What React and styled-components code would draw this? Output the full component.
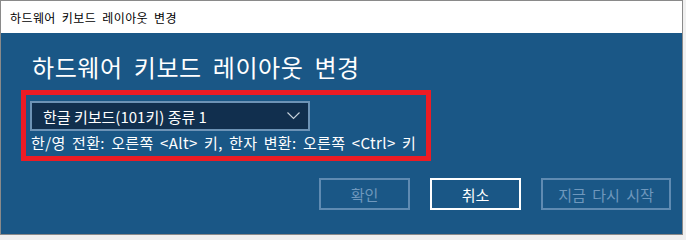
import React from "react";
import styled, { createGlobalStyle } from "styled-components";

const GlobalStyle = createGlobalStyle`
  html, body {
    margin: 0;
    padding: 0;
    background: #f0f0f0;
  }
  body {
    font-family: "Noto Sans CJK KR", "Noto Sans", sans-serif;
  }
`;

const colors = {
  blue: "#1a5786",
  field: "#112f4e",
  fieldBorder: "#6d93b6",
  disabled: "#5f8bb2",
  disabledText: "#6f98bd",
  red: "#ec1c24",
};

const Window = styled.div`
  box-sizing: border-box;
  width: 683px;
  height: 235px;
  border: 1px solid #8a8a8a;
  display: flex;
  flex-direction: column;
  background: ${colors.blue};
`;

const TitleBar = styled.div`
  height: 32px;
  flex: none;
  display: flex;
  align-items: center;
  padding-left: 9px;
  background: #ffffff;
  color: #000000;
  font-size: 12px;
  letter-spacing: 0.4px;
  word-spacing: 3px;
`;

const Body = styled.div`
  flex: 1;
  padding: 19px 11px 0 20px;
  color: #ffffff;
`;

const Heading = styled.h1`
  margin: 0 0 8px 11px;
  font-size: 24px;
  font-weight: 400;
  line-height: 30px;
  letter-spacing: 0.6px;
  word-spacing: 5px;
`;

const Highlight = styled.div`
  box-sizing: border-box;
  width: 410px;
  height: 71px;
  border: 5px solid ${colors.red};
  padding: 6px 4px 0 4px;
  display: flex;
  flex-direction: column;
  gap: 2px;
`;

const Select = styled.div`
  box-sizing: border-box;
  width: 280px;
  height: 30px;
  border: 2px solid ${colors.fieldBorder};
  background: ${colors.field};
  display: flex;
  align-items: center;
  justify-content: space-between;
  padding: 0 8px 0 11px;
  font-size: 15px;
`;

const Hint = styled.div`
  padding-left: 1px;
  font-size: 15px;
  line-height: 20px;
  white-space: nowrap;
  letter-spacing: 0.4px;
  word-spacing: 2.5px;
`;

const Buttons = styled.div`
  display: flex;
  justify-content: flex-end;
  gap: 20px;
  margin-top: 17px;
`;

const Button = styled.button`
  box-sizing: border-box;
  width: ${(p) => p.$width}px;
  height: 32px;
  background: transparent;
  border: 2px solid ${(p) => (p.disabled ? colors.disabled : "#ffffff")};
  color: ${(p) => (p.disabled ? colors.disabledText : "#ffffff")};
  font-family: inherit;
  font-size: 15px;
  word-spacing: 3px;
  padding: 0;
`;

const Chevron = () => (
  <svg width="13" height="8" viewBox="0 0 13 8" fill="none">
    <polyline points="0.5,0.5 6.5,6.5 12.5,0.5" stroke="#c9d3dc" strokeWidth="1.1" />
  </svg>
);

export default function App() {
  return (
    <>
      <GlobalStyle />
      <Window>
        <TitleBar>하드웨어 키보드 레이아웃 변경</TitleBar>
        <Body>
          <Heading>하드웨어 키보드 레이아웃 변경</Heading>
          <Highlight>
            <Select>
              <span>한글 키보드(101키) 종류 1</span>
              <Chevron />
            </Select>
            <Hint>한/영 전환: 오른쪽 &lt;Alt&gt; 키, 한자 변환: 오른쪽 &lt;Ctrl&gt; 키</Hint>
          </Highlight>
          <Buttons>
            <Button $width={91} disabled>확인</Button>
            <Button $width={91}>취소</Button>
            <Button $width={130} disabled>지금 다시 시작</Button>
          </Buttons>
        </Body>
      </Window>
    </>
  );
}
